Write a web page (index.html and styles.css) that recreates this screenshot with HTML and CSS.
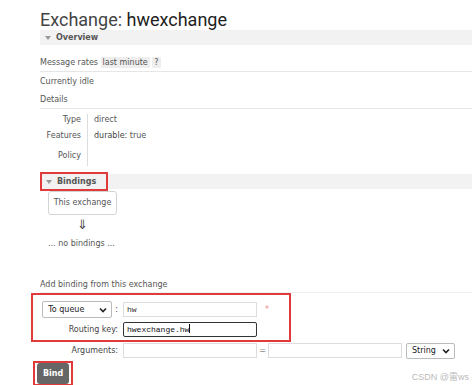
FILE: index.html
```html
<!DOCTYPE html>
<html lang="en">
<head>
    <meta charset="UTF-8" />
    <title>Exchange: hwexchange</title>
    <link rel="stylesheet" href="styles.css">
</head>
<body>
    <div class="page">
        <h1>Exchange: <b>hwexchange</b></h1>
        <div class="section-head"><span class="tri"></span>Overview</div>
        <div class="rates">
            Message rates <span class="chip">last minute</span> <span class="chip">?</span>
        </div>
        <div class="line-row">Currently idle</div>
        <div class="line-row ruled">Details</div>
        <div class="details">
            <div class="labels">
                <span>Type</span>
                <span>Features</span>
                <span>Policy</span>
            </div>
            <div class="values">
                <span>direct</span>
                <span><b>durable:</b> true</span>
                <span></span>
            </div>
        </div>
        <div class="section-head bindings"><span class="mark"><span class="tri"></span>Bindings</span></div>
        <div class="flow">
            <div class="this-ex">This exchange</div>
            <div class="arrow">&#8659;</div>
        </div>
        <div class="none">... no bindings ...</div>

        <div class="add-title">Add binding from this exchange</div>
        <div class="form">
            <div class="mark-box">
                <div class="frow">
                    <div class="lab">
                        <div class="select wide">To queue <svg width="8" height="6" viewBox="0 0 8 6"><path d="M1 1.5 L4 4.5 L7 1.5" fill="none" stroke="#222" stroke-width="1.6"/></svg></div>:
                    </div>
                    <div class="input">hw</div>
                    <span class="req">*</span>
                </div>
                <div class="frow">
                    <div class="lab">Routing key:</div>
                    <div class="input focus">hwexchange.hw<span class="caret"></span></div>
                </div>
            </div>
            <div class="frow args">
                <div class="lab">Arguments:</div>
                <div class="input"></div>
                <span class="eq">=</span>
                <div class="input"></div>
                <div class="select small">String <svg width="8" height="6" viewBox="0 0 8 6"><path d="M1 1.5 L4 4.5 L7 1.5" fill="none" stroke="#222" stroke-width="1.6"/></svg></div>
            </div>
            <div class="bind-mark"><button class="bind">Bind</button></div>
        </div>
        <div class="watermark">CSDN @雷ws</div>
    </div>
</body>
</html>
```

FILE: styles.css
```css
body {
    margin: 0;
    background: #fff;
    font-family: "DejaVu Sans", Verdana, sans-serif;
    font-size: 8px;
    color: #555;
}
.page {
    position: relative;
    height: 385px;
    padding: 0 2px 0 40px;
    overflow: hidden;
}
h1 {
    margin: 0;
    padding-top: 9px;
    height: 21px;
    font-family: Roboto, "Liberation Sans", sans-serif;
    font-size: 18px;
    font-weight: normal;
    line-height: 21px;
    color: #444;
}
h1 b {
    font-weight: normal;
    color: #222;
}
.section-head {
    height: 15px;
    line-height: 15px;
    background: #f2f2f2;
    font-weight: bold;
    color: #555;
    padding-left: 5px;
    display: flex;
    align-items: center;
}
.tri {
    display: inline-block;
    width: 0;
    height: 0;
    border-left: 3px solid transparent;
    border-right: 3px solid transparent;
    border-top: 4px solid #999;
    margin-right: 5px;
}
.rates {
    margin-top: 10px;
    height: 16px;
    line-height: 16px;
    border-bottom: 1px solid #e6e6e6;
}
.chip {
    background: #eee;
    padding: 1px 2px;
    color: #555;
}
.line-row {
    height: 18px;
    line-height: 20px;
}
.ruled {
    border-bottom: 1px solid #e6e6e6;
}
.details {
    display: flex;
    margin-top: 5px;
}
.labels {
    width: 41px;
    text-align: right;
    padding-right: 6px;
    border-right: 1px solid #ddd;
    display: flex;
    flex-direction: column;
    height: 52px;
}
.labels span, .values span {
    height: 20px;
    line-height: 20px;
}
.labels span:first-child, .values span:first-child {
    height: 12px;
    line-height: 12px;
}
.values {
    padding-left: 6px;
    display: flex;
    flex-direction: column;
}
.values b {
    font-weight: normal;
    color: #444;
}
.bindings {
    margin-top: 8px;
    padding-left: 0;
}
.mark {
    display: flex;
    align-items: center;
    height: 15px;
    padding: 0 10px 0 4px;
    border: 2px solid #e03a3a;
}
.flow {
    width: 78px;
    display: flex;
    flex-direction: column;
    align-items: center;
    margin-top: 2px;
}
.this-ex {
    border: 1px solid #d4d4d4;
    border-radius: 3px;
    padding: 0 5px;
    height: 22px;
    line-height: 22px;
    margin-left: 7px;
}
.arrow {
    font-size: 13px;
    line-height: 14px;
    margin-top: 3px;
    margin-left: 7px;
    color: #444;
}
.none {
    margin: 7px 0 0 8px;
    height: 10px;
    line-height: 10px;
}
.add-title {
    margin-top: 30px;
    height: 12px;
    line-height: 12px;
    border-bottom: 1px solid #f0f0f0;
    padding-bottom: 1px;
}
.form {
    margin-left: -9px;
}
.mark-box {
    width: 256px;
    border: 2px solid #e03a3a;
    padding: 6px 0 2px;
}
.frow {
    display: flex;
    align-items: center;
    height: 17px;
}
.frow + .frow {
    margin-top: 3px;
}
.lab {
    width: 85px;
    text-align: right;
    padding-right: 5px;
    display: flex;
    justify-content: flex-end;
    align-items: center;
    color: #444;
}
.select {
    border: 1px solid #bbb;
    border-radius: 2px;
    height: 16px;
    line-height: 16px;
    display: flex;
    align-items: center;
    justify-content: space-between;
    padding: 0 4px 0 5px;
    color: #222;
    background: #fff;
    box-sizing: border-box;
}
.select.wide {
    width: 70px;
    height: 17px;
    margin-right: 3px;
}
.input {
    width: 134px;
    height: 15px;
    box-sizing: border-box;
    border: 1px solid #ddd;
    font-family: "Liberation Mono", "DejaVu Sans Mono", monospace;
    font-size: 8px;
    line-height: 13px;
    padding-left: 3px;
    color: #333;
}
.input.focus {
    border: 1px solid #333;
    border-radius: 2px;
    color: #111;
}
.caret {
    display: inline-block;
    width: 1px;
    height: 9px;
    background: #111;
    vertical-align: -1px;
}
.req {
    margin-left: 8px;
    color: #e88;
    font-size: 8px;
}
.args {
    margin-top: 0;
    margin-left: 2px;
}
.eq {
    width: 11px;
    text-align: center;
    color: #888;
}
.select.small {
    width: 49px;
    margin-left: 4px;
}
.bind-mark {
    display: inline-block;
    margin: 2px 0 0 2px;
    border: 2px solid #e03a3a;
    padding: 0 2px;
}
.bind {
    background: #666;
    color: #fff;
    border: none;
    border-radius: 3px;
    font-family: "DejaVu Sans", Verdana, sans-serif;
    font-size: 8px;
    font-weight: bold;
    height: 21px;
    padding: 0 6px;
    display: block;
}
.watermark {
    position: absolute;
    right: 5px;
    bottom: 2px;
    font-family: "Liberation Sans", "Noto Sans CJK SC", sans-serif;
    font-size: 9px;
    color: #bbb;
}
```
